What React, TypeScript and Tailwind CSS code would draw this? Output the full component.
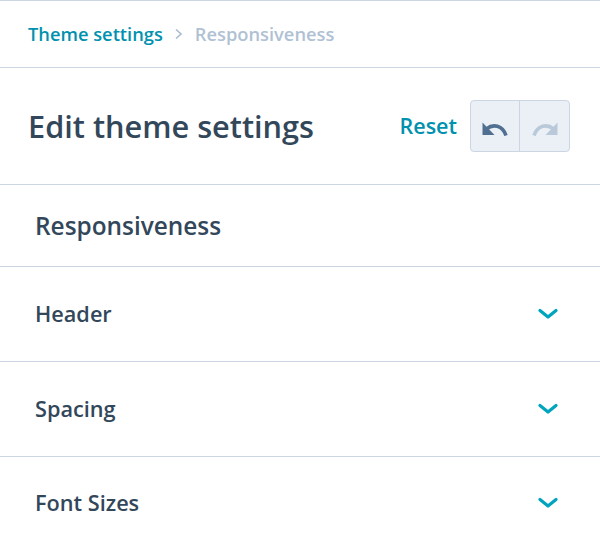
import React from 'react';

const sections = ['Header', 'Spacing', 'Font Sizes'];

const Chevron = () => (
    <svg width="20" height="12" viewBox="0 0 20 12" fill="none" className="block">
        <path d="M2 2.5 L10 9 L18 2.5" stroke="#00a4bd" strokeWidth="3.2" strokeLinecap="round" strokeLinejoin="round" />
    </svg>
);

const UndoIcon = ({ color, flip }: { color: string; flip?: boolean }) => (
    <svg width="26" height="14" viewBox="0 0 26 14" fill="none" className={flip ? '-scale-x-100' : ''}>
        <path d="M0.5 0.5 L0.5 13 L12.5 13 Z" fill={color} />
        <path d="M4.5 6.8 C11 1.6 20.5 3 24 13.5" stroke={color} strokeWidth="3.6" />
    </svg>
);

export default function App() {
    return (
        <div className="w-[600px] h-[548px] overflow-hidden bg-white border-t border-[#cbd6e2] font-['Open_Sans',sans-serif]">
            <div className="h-[67px] flex items-center pl-7 border-b border-[#cbd6e2] text-[18.3px] font-semibold">
                <span className="text-[#0091ae]">Theme settings</span>
                <svg width="10" height="12" viewBox="0 0 10 12" fill="none" className="mx-[11px]">
                    <path d="M2 1.5 L7 6 L2 10.5" stroke="#a9bccf" strokeWidth="1.6" />
                </svg>
                <span className="text-[#b0c1d4]">Responsiveness</span>
            </div>

            <div className="h-[117px] flex items-center justify-between pl-7 pr-[30px] border-b border-[#cbd6e2]">
                <h1 className="text-[30.7px] font-semibold text-[#33475b]">Edit theme settings</h1>
                <div className="flex items-center gap-[13px]">
                    <span className="text-[21.5px] font-semibold text-[#0091ae]">Reset</span>
                    <div className="flex h-[52px] w-[100px] rounded-[4px] border border-[#cbd6e2] bg-[#eaf0f6]">
                        <div className="w-[49px] flex items-center justify-center border-r border-[#cbd6e2] pt-[6px]">
                            <UndoIcon color="#516f90" />
                        </div>
                        <div className="flex-1 flex items-center justify-center pt-[6px]">
                            <UndoIcon color="#b9c9d9" flip />
                        </div>
                    </div>
                </div>
            </div>

            <div className="h-[82px] flex items-center pl-[35px] pt-[2px] border-b border-[#cbd6e2]">
                <h2 className="text-[24.4px] font-semibold text-[#33475b]">Responsiveness</h2>
            </div>

            {sections.map(name => (
                <div key={name} className="h-[95px] flex items-center justify-between pl-[35px] pr-[42px] border-b border-[#cbd6e2] first:pt-[2px] last:border-b-0 last:h-[92px]">
                    <span className="text-[21.7px] font-semibold text-[#33475b]">{name}</span>
                    <Chevron />
                </div>
            ))}
        </div>
    );
}
